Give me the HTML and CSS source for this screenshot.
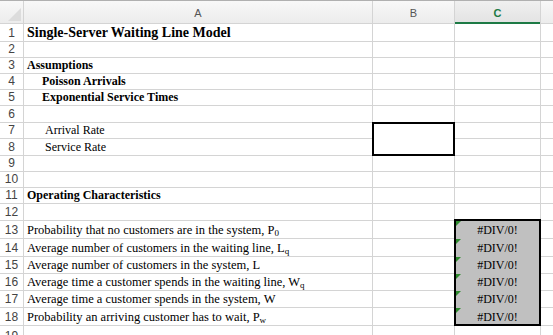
FILE: index.html
```html
<!DOCTYPE html>
<html>
  <head>
    <meta name="viewport" content="width=device-width, initial-scale=1.0" />
    <link rel="stylesheet" href="styles.css">
  </head>
  <body>
    <div class="sheet">
      <!-- column headers -->
      <div class="corner"></div>
      <div class="col-head">A</div>
      <div class="col-head">B</div>
      <div class="col-head active">C</div>
      <div class="col-head"></div>

      <div class="num">1</div><div class="cell title">Single-Server Waiting Line Model</div><div class="cell"></div><div class="cell"></div><div class="cell"></div>
      <div class="num">2</div><div class="cell"></div><div class="cell"></div><div class="cell"></div><div class="cell"></div>
      <div class="num">3</div><div class="cell bold">Assumptions</div><div class="cell"></div><div class="cell"></div><div class="cell"></div>
      <div class="num">4</div><div class="cell bold indent">Poisson Arrivals</div><div class="cell"></div><div class="cell"></div><div class="cell"></div>
      <div class="num">5</div><div class="cell bold indent">Exponential Service Times</div><div class="cell"></div><div class="cell"></div><div class="cell"></div>
      <div class="num">6</div><div class="cell"></div><div class="cell"></div><div class="cell"></div><div class="cell"></div>
      <div class="num">7</div><div class="cell indent2">Arrival Rate</div><div class="input-box"></div><div class="cell"></div><div class="cell"></div>
      <div class="num">8</div><div class="cell indent2">Service Rate</div><div class="cell"></div><div class="cell"></div>
      <div class="num">9</div><div class="cell"></div><div class="cell"></div><div class="cell"></div><div class="cell"></div>
      <div class="num">10</div><div class="cell"></div><div class="cell"></div><div class="cell"></div><div class="cell"></div>
      <div class="num">11</div><div class="cell bold">Operating Characteristics</div><div class="cell"></div><div class="cell"></div><div class="cell"></div>
      <div class="num">12</div><div class="cell"></div><div class="cell"></div><div class="cell"></div><div class="cell"></div>

      <div class="num">13</div><div class="cell">Probability that no customers are in the system, P<sub>0</sub></div><div class="cell"></div>
      <div class="result-box">
        <div class="result">#DIV/0!</div>
        <div class="result">#DIV/0!</div>
        <div class="result">#DIV/0!</div>
        <div class="result">#DIV/0!</div>
        <div class="result">#DIV/0!</div>
        <div class="result">#DIV/0!</div>
      </div>
      <div class="cell"></div>
      <div class="num">14</div><div class="cell">Average number of customers in the waiting line, L<sub>q</sub></div><div class="cell"></div><div class="cell"></div>
      <div class="num">15</div><div class="cell">Average number of customers in the system, L</div><div class="cell"></div><div class="cell"></div>
      <div class="num">16</div><div class="cell">Average time a customer spends in the waiting line, W<sub>q</sub></div><div class="cell"></div><div class="cell"></div>
      <div class="num">17</div><div class="cell">Average time a customer spends in the system, W</div><div class="cell"></div><div class="cell"></div>
      <div class="num">18</div><div class="cell">Probability an arriving customer has to wait, P<sub>w</sub></div><div class="cell"></div><div class="cell"></div>
      <div class="num last">19</div><div class="cell"></div><div class="cell"></div><div class="cell"></div><div class="cell"></div>
    </div>
  </body>
</html>
```

FILE: styles.css
```css
:root {
  --grid-line: #d4d4d4;
  --head-top: #f8f8f8;
  --head-bottom: #ececec;
  --num-text: #444444;
  --green: #1d7a45;
}

* {
  box-sizing: border-box;
  margin: 0;
  padding: 0;
}

body {
  width: 553px;
  height: 335px;
  overflow: hidden;
  background: #ffffff;
  font-family: "Liberation Serif", "Times New Roman", serif;
  color: #000000;
}

.sheet {
  display: grid;
  grid-template-columns: 23px 348px 81px 85px 1fr;
  grid-template-rows: 22px 17px 15px 15px 15px 15px 16px 15px 16px 15px 15px 15px 16px 17px 17px 16px 16px 16px 17px 20px;
  gap: 1px;
  background: var(--grid-line);
  border-top: 1px solid #b0b0b0;
  height: 336px;
}

.corner,
.col-head {
  background: linear-gradient(var(--head-top), var(--head-bottom));
}

.corner {
  position: relative;
}

.corner::after {
  content: '';
  position: absolute;
  right: 2px;
  bottom: 2px;
  border-style: solid;
  border-width: 0 0 13px 13px;
  border-color: transparent transparent #dcdcdc transparent;
}

.col-head {
  display: flex;
  align-items: center;
  justify-content: center;
  font-family: "Liberation Sans", Arial, sans-serif;
  font-size: 11px;
  color: #555555;
  padding-top: 1px;
}

.col-head.active {
  background: linear-gradient(#f0f0f0, #e2e2e2);
  color: var(--green);
  font-weight: 700;
  box-shadow: inset 0 -2px 0 var(--green);
  margin-bottom: -1px;
}

.num {
  background: #ffffff;
  display: flex;
  align-items: flex-end;
  justify-content: center;
  font-family: "Liberation Sans", Arial, sans-serif;
  font-size: 12px;
  color: var(--num-text);
  line-height: 14px;
  padding-bottom: 1px;
}

.num.last {
  align-items: flex-start;
  padding-top: 3px;
}

.cell {
  background: #ffffff;
  display: flex;
  align-items: flex-end;
  font-size: 12.5px;
  line-height: 14px;
  padding: 0 0 1px 3px;
  white-space: nowrap;
  overflow: visible;
}

.title {
  font-size: 14px;
  font-weight: 700;
  line-height: 17px;
  padding-bottom: 0;
}

.bold {
  font-weight: 700;
  font-size: 12px;
}

.indent {
  padding-left: 18px;
}

.indent2 {
  padding-left: 21px;
  font-size: 12px;
}

sub {
  font-size: 9px;
  line-height: 1;
  vertical-align: -2px;
  align-self: flex-end;
  margin-bottom: -1px;
}

.input-box {
  grid-row: 8 / 10;
  grid-column: 3;
  margin: -1px;
  background: #ffffff;
  border: 2px solid #000000;
  z-index: 1;
}

.result-box {
  grid-row: 14 / 20;
  grid-column: 4;
  margin: -1px;
  background: #c0c0c0;
  border: 2px solid #000000;
  display: grid;
  grid-template-rows: 17px 17px 16px 16px 16px 17px;
  row-gap: 1px;
  margin-top: -2px;
  z-index: 1;
}

.result {
  position: relative;
  display: flex;
  align-items: flex-end;
  justify-content: center;
  font-size: 12px;
  line-height: 14px;
  padding-bottom: 1px;
}

.result::before {
  content: '';
  position: absolute;
  left: 0;
  top: 0;
  border-style: solid;
  border-width: 5px 5px 0 0;
  border-color: #2e8b2e transparent transparent transparent;
}
```
